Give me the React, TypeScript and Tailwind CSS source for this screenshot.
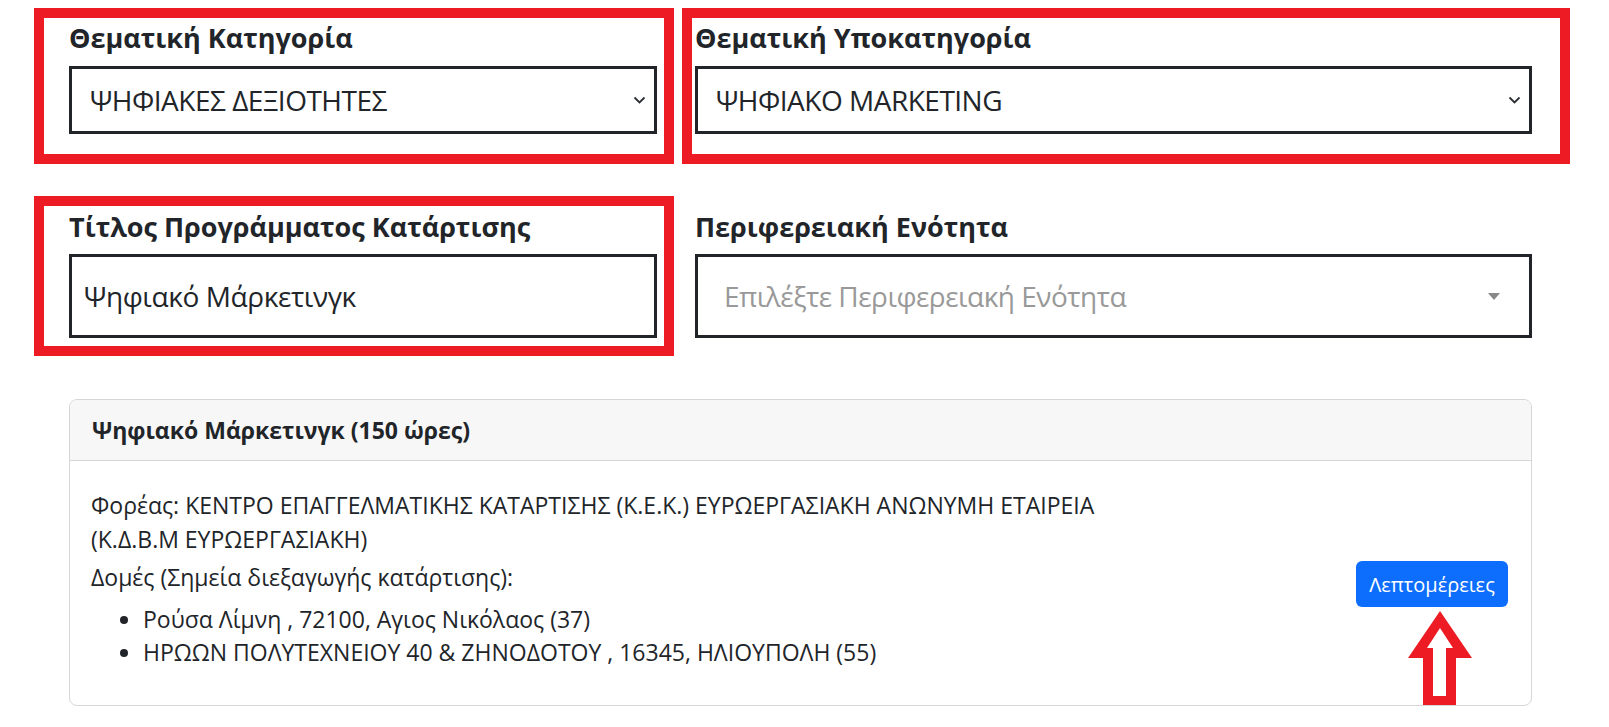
import React from 'react';

function Chevron() {
  return (
    <svg width="13" height="8" viewBox="0 0 13 8" className="shrink-0">
      <polyline points="1.5,1.5 6.5,6.5 11.5,1.5" fill="none" stroke="#2b3035" strokeWidth="1.8" />
    </svg>
  );
}

function RedBox({ className }: { className: string }) {
  return <div className={`pointer-events-none absolute border-[10px] border-[#ed1c24] ${className}`} />;
}

export default function App() {
  return (
    <div className="relative min-h-[727px] w-full bg-white font-['Open_Sans','Noto_Sans',sans-serif] text-[#212529]">
      <div className="w-[1532px] pl-[69px] pt-[20px]">
        {/* φίλτρα */}
        <div className="grid grid-cols-[588px_837px] gap-x-[38px] gap-y-[74px]">
          <div className="relative">
            <RedBox className="-left-[35px] -right-[17px] -top-[12px] -bottom-[30px]" />
            <label className="mb-[6px] block h-[40px] text-[27px] font-bold leading-[35px]">Θεματική Κατηγορία</label>
            <div className="flex h-[68px] items-center justify-between border-[3px] border-[#212529] pl-[18px] pr-[8px]">
              <span className="text-[28px] tracking-[-0.5px]">ΨΗΦΙΑΚΕΣ ΔΕΞΙΟΤΗΤΕΣ</span>
              <Chevron />
            </div>
          </div>

          <div className="relative">
            <RedBox className="-left-[13px] -right-[38px] -top-[12px] -bottom-[30px]" />
            <label className="mb-[6px] block h-[40px] text-[27px] font-bold leading-[35px]">Θεματική Υποκατηγορία</label>
            <div className="flex h-[68px] items-center justify-between border-[3px] border-[#212529] pl-[18px] pr-[8px]">
              <span className="text-[28px] tracking-[-0.5px]">ΨΗΦΙΑΚΟ MARKETING</span>
              <Chevron />
            </div>
          </div>

          <div className="relative">
            <RedBox className="-left-[35px] -right-[17px] -top-[12px] -bottom-[18px]" />
            <label className="mb-[6px] block h-[40px] text-[27px] font-bold leading-[37px]">Τίτλος Προγράμματος Κατάρτισης</label>
            <div className="flex h-[84px] items-center border-[3px] border-[#212529] pl-[12px]">
              <span className="text-[28px] tracking-[-0.4px]">Ψηφιακό Μάρκετινγκ</span>
            </div>
          </div>

          <div>
            <label className="mb-[6px] block h-[40px] text-[27px] font-bold leading-[37px]">Περιφερειακή Ενότητα</label>
            <div className="flex h-[84px] items-center justify-between border-[3px] border-[#212529] pl-[26px] pr-[29px]">
              <span className="text-[28px] tracking-[-0.5px] text-[#999999]">Επιλέξτε Περιφερειακή Ενότητα</span>
              <svg width="12" height="7" viewBox="0 0 12 7">
                <polygon points="0,0 12,0 6,7" fill="#888888" />
              </svg>
            </div>
          </div>
        </div>

        {/* κάρτα προγράμματος */}
        <div className="mt-[61px] w-[1463px] overflow-hidden rounded-[8px] border border-[#d6d6d6]">
          <div className="flex h-[61px] items-center border-b border-[#d6d6d6] bg-[#f7f7f7] pl-[22px]">
            <h5 className="text-[23px] font-bold">Ψηφιακό Μάρκετινγκ (150 ώρες)</h5>
          </div>
          <div className="flex items-center justify-between pl-[21px] pr-[23px] pt-[28px] pb-[35px] text-[23px] leading-[33.5px]">
            <div>
              <div>
                Φορέας: ΚΕΝΤΡΟ ΕΠΑΓΓΕΛΜΑΤΙΚΗΣ ΚΑΤΑΡΤΙΣΗΣ (Κ.Ε.Κ.) ΕΥΡΩΕΡΓΑΣΙΑΚΗ ΑΝΩΝΥΜΗ ΕΤΑΙΡΕΙΑ
                <br />
                (Κ.Δ.Β.Μ ΕΥΡΩΕΡΓΑΣΙΑΚΗ)
              </div>
              <div className="mt-[5px]">Δομές (Σημεία διεξαγωγής κατάρτισης):</div>
              <ul className="mt-[8px] list-disc pl-[52px]">
                <li>Ρούσα Λίμνη , 72100, Αγιος Νικόλαος (37)</li>
                <li>ΗΡΩΩΝ ΠΟΛΥΤΕΧΝΕΙΟΥ 40 &amp; ΖΗΝΟΔΟΤΟΥ , 16345, ΗΛΙΟΥΠΟΛΗ (55)</li>
              </ul>
            </div>
            <div className="relative pt-[10px]">
              <button className="h-[46px] w-[152px] rounded-[6px] bg-[#0d6efd] text-[20px] text-white">
                Λεπτομέρειες
              </button>
              {/* κόκκινο βέλος */}
              <svg
                width="66"
                height="98"
                viewBox="0 0 66 98"
                className="pointer-events-none absolute left-[51px] top-[60px]"
              >
                <polygon points="33,0 65,47 49,47 49,98 16,98 16,47 1,47" fill="#ed1c24" />
                <polygon points="33,17 46,37 39,37 39,85 26,85 26,37 20,37" fill="#ffffff" />
              </svg>
            </div>
          </div>
        </div>
      </div>
    </div>
  );
}
